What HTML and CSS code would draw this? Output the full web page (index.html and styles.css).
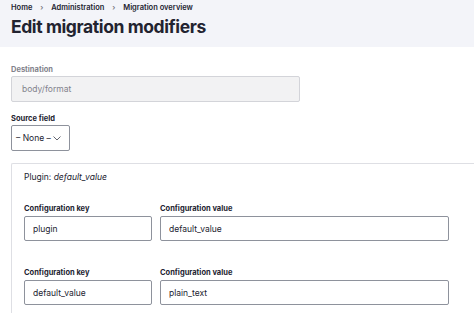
FILE: index.html
```html
<!DOCTYPE html>
<html lang="en">
<head>
  <meta charset="UTF-8" />
  <title>Edit migration modifiers</title>
  <link rel="stylesheet" href="styles.css">
</head>
<body>
  <header class="page-header">
    <nav class="breadcrumb">
      <a href="#">Home</a>
      <span class="sep">›</span>
      <a href="#">Administration</a>
      <span class="sep">›</span>
      <a href="#">Migration overview</a>
    </nav>
    <h1 class="page-title">Edit migration modifiers</h1>
  </header>

  <main class="content">
    <div class="form-item is-disabled">
      <label class="form-label">Destination</label>
      <input class="form-text wide" type="text" value="body/format" disabled>
    </div>

    <div class="form-item">
      <label class="form-label">Source field</label>
      <div class="select">
        <span>– None –</span>
        <svg width="8" height="5" viewBox="0 0 8 5"><path d="M0.5 0.5 L4 4 L7.5 0.5" fill="none" stroke="#545560" stroke-width="0.9"/></svg>
      </div>
    </div>

    <fieldset class="plugin">
      <legend class="plugin-title">Plugin: <em>default_value</em></legend>

      <div class="config-row">
        <div class="form-item">
          <label class="form-label">Configuration key</label>
          <input class="form-text key" type="text" value="plugin">
        </div>
        <div class="form-item">
          <label class="form-label">Configuration value</label>
          <input class="form-text wide" type="text" value="default_value">
        </div>
      </div>

      <div class="config-row">
        <div class="form-item">
          <label class="form-label">Configuration key</label>
          <input class="form-text key" type="text" value="default_value">
        </div>
        <div class="form-item">
          <label class="form-label">Configuration value</label>
          <input class="form-text wide" type="text" value="plain_text">
        </div>
      </div>
    </fieldset>
  </main>
</body>
</html>
```

FILE: styles.css
```css
body {
  margin: 0;
  background: #fff;
  color: #222330;
  font-family: Inter, "Liberation Sans", sans-serif;
  overflow: hidden;
}

/* En-tête gris */
.page-header {
  box-sizing: border-box;
  height: 47px;
  background: #f3f4f9;
  padding: 3px 11px 0;
}

.breadcrumb {
  font-size: 7.5px;
  font-weight: 600;
  line-height: 10px;
}

.breadcrumb a {
  color: #222330;
  text-decoration: none;
}

.breadcrumb .sep {
  color: #75767f;
  margin: 0 6px;
}

.page-title {
  margin: 3px 0 0;
  font-size: 17.5px;
  font-weight: 700;
  line-height: 22px;
  letter-spacing: -0.4px;
}

/* Formulaire */
.content {
  padding: 18px 11px 0;
}

.form-item {
  display: flex;
  flex-direction: column;
  margin-bottom: 12px;
}

.form-label {
  font-size: 7.5px;
  font-weight: 700;
  line-height: 10px;
  margin-bottom: 1px;
}

.is-disabled .form-label {
  color: #82828c;
}

.form-text {
  box-sizing: border-box;
  height: 26px;
  padding: 0 8px;
  border: 1px solid #8e929c;
  border-radius: 2px;
  font-family: inherit;
  font-size: 8.5px;
  color: #222330;
  background: #fff;
}

.form-text:disabled {
  padding: 0 10px;
  background: #f2f2f3;
  border-color: #d3d4d9;
  color: #82828c;
}

.wide {
  width: 289px;
}

.key {
  width: 128px;
}

.select {
  box-sizing: border-box;
  width: 59px;
  height: 26px;
  display: flex;
  align-items: center;
  gap: 2px;
  padding: 0 4px;
  border: 1px solid #8e929c;
  border-radius: 2px;
  font-size: 8.5px;
}

/* Bloc plugin */
.plugin {
  min-width: 0;
  margin: 0 -11px 0 0;
  padding: 8px 12px 8px;
  border: 1px solid #dedfe4;
  border-right: none;
  border-bottom: none;
  border-radius: 2px 0 0 0;
}

.plugin-title {
  float: left;
  width: 100%;
  padding: 0;
  font-size: 8.5px;
  line-height: 10px;
  margin-bottom: 22px;
}

.config-row {
  clear: both;
  display: flex;
  gap: 8px;
}

.config-row + .config-row {
  margin-top: 27px;
}

.config-row .form-item {
  flex: none;
  margin-bottom: 0;
}

.config-row .form-label {
  margin-bottom: 2px;
}

.config-row .form-text {
  height: 25px;
}
```
